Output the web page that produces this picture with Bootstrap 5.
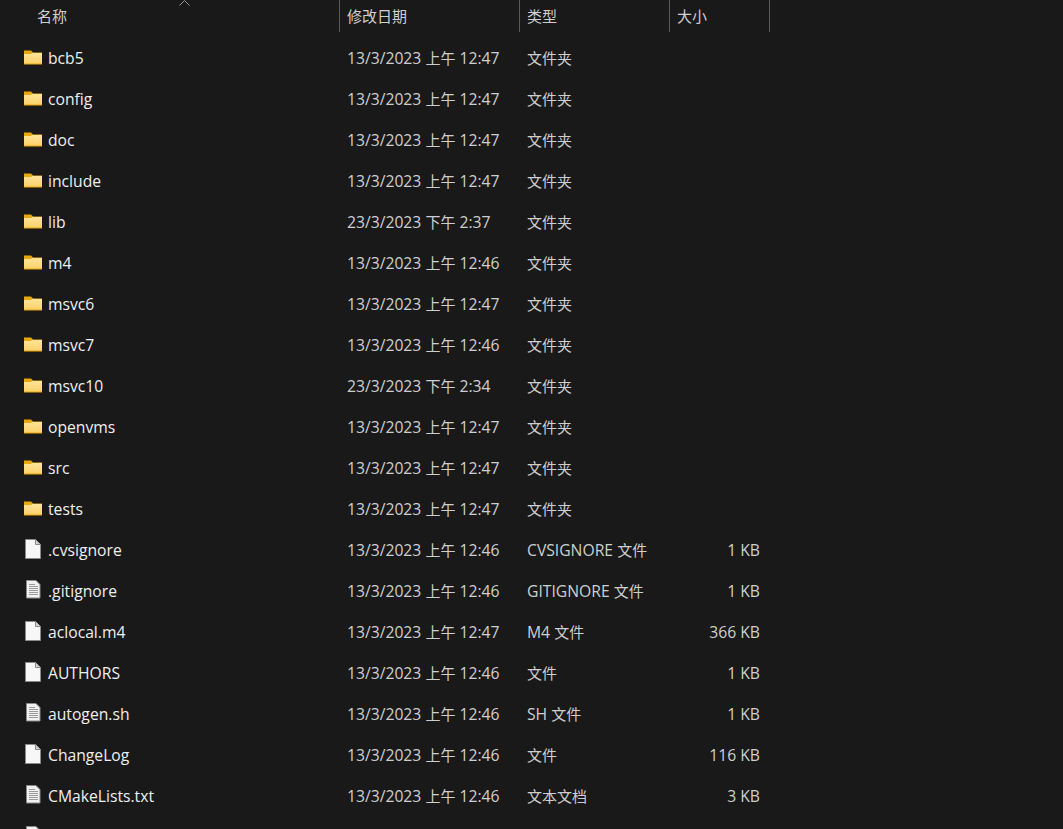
<!DOCTYPE html>
<html lang="zh-CN"><head><meta charset="utf-8"><title>文件列表</title>
<link href="https://cdn.jsdelivr.net/npm/bootstrap@5.3.0/dist/css/bootstrap.min.css" rel="stylesheet">
<style>
html,body{height:100%;overflow:hidden}
body{background:#191919;color:#dedede;font-family:"Open Sans","Noto Sans CJK SC",sans-serif;font-size:15.7px}
.cj{font-size:15px}
.hdr{height:32px;color:#cfcfcf}
.hdr>div{border-right:1px solid #5a5a5a;padding-left:7px;line-height:32px}
.hdr .cn{padding-left:37px;position:relative}
.arrow{position:absolute;left:179px;top:0}
.rw{height:41px;line-height:40px}
.list{padding-top:6px}
.cn{width:340px;flex:none}
.cd{width:180px;flex:none;padding-left:7px;color:#cfcfcf}
.ct{width:150px;flex:none;padding-left:7px;color:#cfcfcf}
.cs{width:100px;flex:none;padding-right:10px;text-align:right;color:#cfcfcf}
.hdr .cs{text-align:left}
.nm{padding-left:24px;padding-bottom:2px;color:#efefef}
.ic{width:20px;height:20px;margin-right:4px;margin-top:-1px;flex:none}
</style></head><body>
<svg width="0" height="0" class="position-absolute">
<defs>
<linearGradient id="g" x1="0" y1="0" x2="0" y2="1"><stop offset="0" stop-color="#ffe49a"/><stop offset="1" stop-color="#fcd26a"/></linearGradient>
<symbol id="fo" viewBox="0 0 20 20"><path d="M0 3.500h7l2 2h9v12H0z" fill="#e9a80f"/><path d="M0 7h7l1.500-1H18v10.500H0z" fill="url(#g)"/></symbol>
<symbol id="fi" viewBox="0 0 20 20"><path d="M1.500.5h10l5 5v14h-15z" fill="#f7f7f7" stroke="#8a8a8a"/><path d="M11.500.5v5h5" fill="#cfcfcf" stroke="#8a8a8a"/></symbol>
<symbol id="tx" viewBox="0 0 20 20"><path d="M2.500.5h9.500l4 4v13.500h-13.500z" fill="#f0f0f0" stroke="#8a8a8a"/><path d="M5 4.500h6M5 6.500h9M5 8.500h9M5 10.500h9M5 12.500h9M5 14.500h9" stroke="#9a9a9a"/></symbol>
</defs></svg>
<div class="hdr d-flex">
<div class="cn"><span class="cj">名称</span><svg class="arrow" width="11" height="6" viewBox="0 0 11 6"><path d="M.5 5.500l5-5 5 5" fill="none" stroke="#9a9a9a"/></svg></div>
<div class="cd"><span class="cj">修改日期</span></div><div class="ct"><span class="cj">类型</span></div><div class="cs"><span class="cj">大小</span></div>
</div>
<div class="list" id="l"></div>
<script>
var F="文件夹",d=[["bcb5","13/3/2023 上午 12:47",F,"","fo"],["config","13/3/2023 上午 12:47",F,"","fo"],["doc","13/3/2023 上午 12:47",F,"","fo"],["include","13/3/2023 上午 12:47",F,"","fo"],["lib","23/3/2023 下午 2:37",F,"","fo"],["m4","13/3/2023 上午 12:46",F,"","fo"],["msvc6","13/3/2023 上午 12:47",F,"","fo"],["msvc7","13/3/2023 上午 12:46",F,"","fo"],["msvc10","23/3/2023 下午 2:34",F,"","fo"],["openvms","13/3/2023 上午 12:47",F,"","fo"],["src","13/3/2023 上午 12:47",F,"","fo"],["tests","13/3/2023 上午 12:47",F,"","fo"],[".cvsignore","13/3/2023 上午 12:46","CVSIGNORE 文件","1 KB","fi"],[".gitignore","13/3/2023 上午 12:46","GITIGNORE 文件","1 KB","tx"],["aclocal.m4","13/3/2023 上午 12:47","M4 文件","366 KB","fi"],["AUTHORS","13/3/2023 上午 12:46","文件","1 KB","fi"],["autogen.sh","13/3/2023 上午 12:46","SH 文件","1 KB","tx"],["ChangeLog","13/3/2023 上午 12:46","文件","116 KB","fi"],["CMakeLists.txt","13/3/2023 上午 12:46","文本文档","3 KB","tx"],["","","","","tx"]];
function c(s){return s.replace(/[\u4e00-\u9fff]+/g,'<span class="cj">$&</span>')}
document.getElementById("l").innerHTML=d.map(function(r){return '<div class="rw d-flex"><div class="cn nm d-flex align-items-center"><svg class="ic"><use href="#'+r[4]+'"/></svg>'+r[0]+'</div><div class="cd">'+c(r[1])+'</div><div class="ct">'+c(r[2])+'</div><div class="cs">'+r[3]+'</div></div>'}).join("");
</script>
<script src="https://cdn.jsdelivr.net/npm/bootstrap@5.3.0/dist/js/bootstrap.bundle.min.js"></script>
</body></html>
